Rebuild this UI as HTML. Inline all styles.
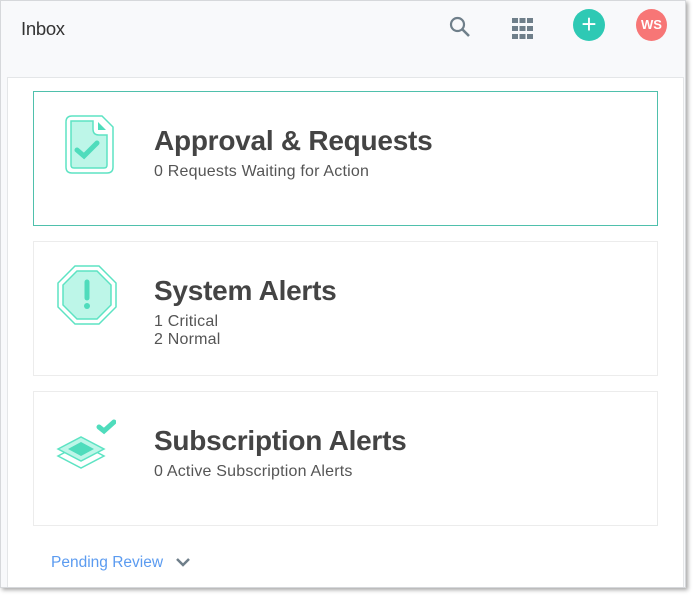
<!DOCTYPE html>
<html><head><style>
*{margin:0;padding:0;box-sizing:border-box}
body{width:694px;height:596px;background:#fff;font-family:"Liberation Sans",sans-serif;position:relative;overflow:hidden}
.win{position:absolute;left:0;top:0;width:686px;height:588px;background:#f8f9fb;border:1px solid #d6d8db;box-shadow:2px 2px 4px rgba(0,0,0,.35)}
.title{position:absolute;left:20px;top:17px;font-size:18.5px;color:#333;letter-spacing:-0.3px}
.panel{position:absolute;left:7px;top:77px;width:677px;height:510px;background:#fff;border:1px solid #e4e6e8;border-bottom:none}
.card{position:absolute;left:33px;width:625px;height:135px;background:#fff;border:1px solid #ececec}
.card h2{position:absolute;left:120px;top:33px;font-size:28px;font-weight:bold;color:#444;letter-spacing:-0.25px}
.card p{position:absolute;left:120px;top:71px;font-size:16px;color:#555;line-height:18px;letter-spacing:0.2px}
.card svg{position:absolute}
</style></head><body>
<div class="win">
<div class="title">Inbox</div>
<svg style="position:absolute;left:447px;top:14px" width="24" height="24" viewBox="0 0 24 24"><circle cx="9.5" cy="9.5" r="6.5" fill="none" stroke="#6f7f8a" stroke-width="2.2"/><line x1="14.5" y1="14.5" x2="21" y2="21" stroke="#6f7f8a" stroke-width="2.6"/></svg>
<svg style="position:absolute;left:511px;top:17px" width="21" height="21" viewBox="0 0 21 21" fill="#6f7f8a"><rect x="0" y="0" width="6" height="5"/><rect x="7.5" y="0" width="6" height="5"/><rect x="15" y="0" width="6" height="5"/><rect x="0" y="8" width="6" height="5"/><rect x="7.5" y="8" width="6" height="5"/><rect x="15" y="8" width="6" height="5"/><rect x="0" y="16" width="6" height="5"/><rect x="7.5" y="16" width="6" height="5"/><rect x="15" y="16" width="6" height="5"/></svg>
<div style="position:absolute;left:572px;top:8px;width:32px;height:32px;border-radius:50%;background:#2ec9b4;color:#fff;font-size:26px;line-height:31px;text-align:center">+</div>
<div style="position:absolute;left:635px;top:8px;width:31px;height:32px;border-radius:50%;background:#f77676;color:#fff;font-size:13px;font-weight:bold;line-height:32px;text-align:center">WS</div>
</div>
<div class="panel"></div>
<div class="card" style="top:91px;border-color:#4fc0ac">
<svg style="left:31px;top:23px" width="50" height="60" viewBox="0 0 50 60"><path d="M7 1H37L48 12V52Q48 58 42 58H7Q1 58 1 52V7Q1 1 7 1Z" fill="none" stroke="#5de3c3" stroke-width="1.5"/><path d="M6 6H28V14Q28 20 34 20H42V50Q42 53 39 53H9Q6 53 6 50Z" fill="#bdf6e8" stroke="#5de3c3" stroke-width="1.5"/><path d="M33 7L41 15H33Z" fill="#4fdcbc"/><path d="M12 35L19 41L32 28" fill="none" stroke="#4fdcbc" stroke-width="5" stroke-linecap="round"/></svg>
<h2>Approval &amp; Requests</h2><p>0 Requests Waiting for Action</p></div>
<div class="card" style="top:241px">
<svg style="left:23px;top:23px" width="60" height="60" viewBox="0 0 60 60"><path d="M18 1H42L59 18V42L42 59H18L1 42V18Z" fill="none" stroke="#5de3c3" stroke-width="1.5"/><path d="M20 6H40L54 20V40L40 54H20L6 40V20Z" fill="#bdf6e8" stroke="#5de3c3" stroke-width="1.5"/><line x1="30" y1="17" x2="30" y2="33" stroke="#4fdcbc" stroke-width="5" stroke-linecap="round"/><circle cx="30" cy="41" r="3" fill="#4fdcbc"/></svg>
<h2>System Alerts</h2><p>1 Critical<br>2 Normal</p></div>
<div class="card" style="top:391px">
<svg style="left:22px;top:26px" width="60" height="56" viewBox="0 0 60 56"><path d="M2 38L25 26L48 38L25 50Z" fill="none" stroke="#5de3c3" stroke-width="1.5"/><path d="M2 31L25 19L48 31L25 43Z" fill="#bdf6e8" stroke="#5de3c3" stroke-width="1.5"/><path d="M12 31L25 24L38 31L25 38Z" fill="#4fdcbc"/><path d="M43 9L48 13L58 4" fill="none" stroke="#4fdcbc" stroke-width="5" stroke-linecap="round"/></svg>
<h2>Subscription Alerts</h2><p>0 Active Subscription Alerts</p></div>
<div style="position:absolute;left:51px;top:554px;font-size:15.5px;color:#5b9bf0">Pending Review</div>
<svg style="position:absolute;left:176px;top:558px" width="14" height="10" viewBox="0 0 14 10"><path d="M1 1L7 7L13 1" fill="none" stroke="#6f7f8a" stroke-width="2.5"/></svg>
</body></html>
